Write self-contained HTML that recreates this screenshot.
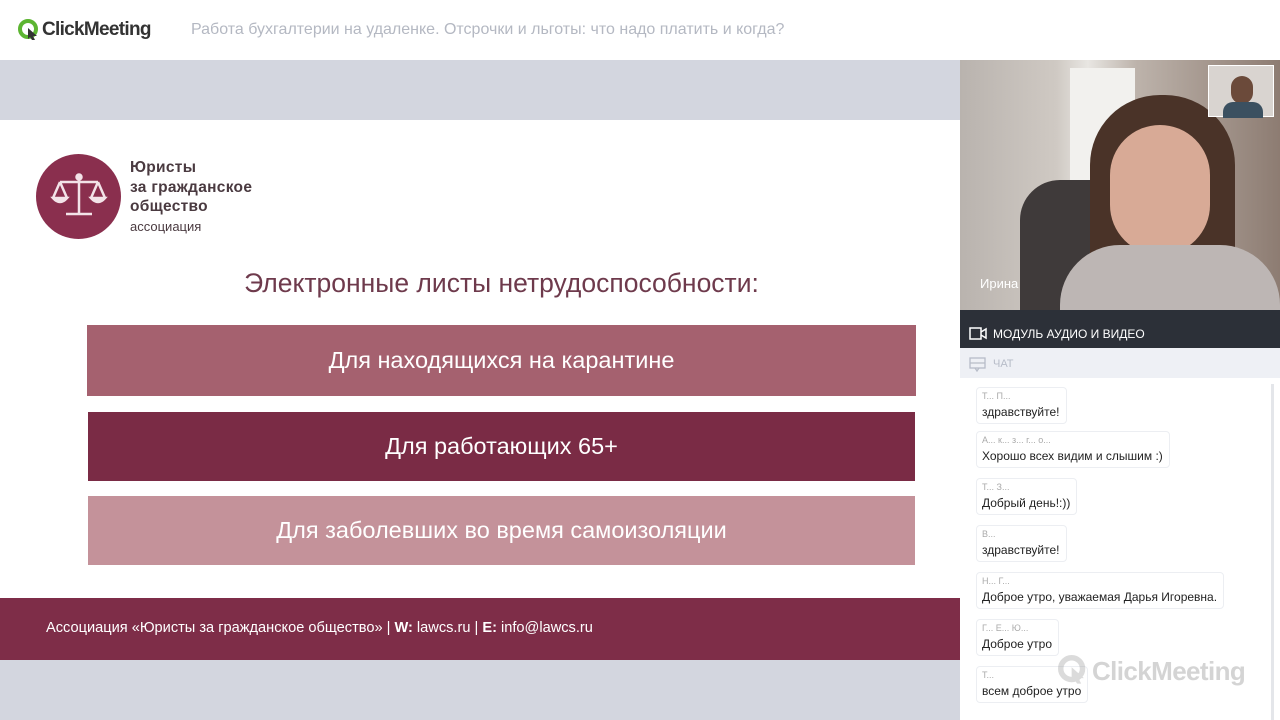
<!DOCTYPE html>
<html><head><meta charset="utf-8"><style>
*{margin:0;padding:0;box-sizing:border-box}
body{width:1280px;height:720px;overflow:hidden;background:#fff;font-family:"Liberation Sans","Noto Sans CJK SC",sans-serif;position:relative}
.a{position:absolute}
.bar{position:absolute;left:87px;width:829px;color:#fff;font-size:23.5px;text-align:center}
.msg{position:absolute;left:976px;border:1px solid #eceef2;border-radius:4px;padding:3px 6px 4px 5px;font-size:12px;color:#222;background:#fff}
.msg i{display:block;font-style:normal;font-size:9px;color:#aaa;margin-bottom:4px}
</style></head><body>
<div class="a" style="left:0;top:0;width:1280px;height:60px;background:#fff"></div>
<svg class="a" style="left:18px;top:19px" width="22" height="22" viewBox="0 0 22 22"><circle cx="10" cy="10" r="8" fill="none" stroke="#5cb531" stroke-width="4"/><path d="M10 9 L19 17 L15 17 L17 21 L14 21 L12 18 L10 20Z" fill="#333"/></svg>
<div class="a" style="left:42px;top:19px;font-size:19px;font-weight:bold;color:#333;letter-spacing:-0.7px">ClickMeeting</div>
<div class="a" style="left:191px;top:21px;font-size:16px;color:#b4b8c2">Работа бухгалтерии на удаленке. Отсрочки и льготы: что надо платить и когда?</div>
<div class="a" style="left:0;top:60px;width:960px;height:60px;background:#d3d6df"></div>
<div class="a" style="left:0;top:660px;width:960px;height:60px;background:#d3d6df"></div>
<div class="a" style="left:36px;top:154px;width:85px;height:85px;border-radius:50%;background:#8a2f4e"></div>
<svg class="a" style="left:50px;top:172px" width="58" height="50" viewBox="0 0 58 50" fill="none" stroke="#f3e3e8" stroke-width="2.5"><path d="M29 4V42M10 10H48M16 42H42M10 10L3 26M10 10L17 26M48 10L41 26M48 10L55 26"/><path d="M3 26Q10 34 17 26ZM41 26Q48 34 55 26Z" fill="#f3e3e8"/><circle cx="29" cy="5" r="2.5" fill="#f3e3e8"/></svg>
<div class="a" style="left:130px;top:158px;font-size:15.5px;font-weight:bold;color:#4a3a40;line-height:19.5px;letter-spacing:0.3px">Юристы<br>за гражданское<br>общество</div>
<div class="a" style="left:130px;top:219px;font-size:13px;color:#4a3a40">ассоциация</div>
<div class="a" style="left:0;top:268px;width:1003px;text-align:center;font-size:26.5px;color:#6e3a4c">Электронные листы нетрудоспособности:</div>
<div class="bar" style="top:325px;height:71px;line-height:71px;background:#a5616f">Для находящихся на карантине</div>
<div class="bar" style="top:412px;height:69px;line-height:69px;background:#7a2b45;left:88px;width:827px">Для работающих 65+</div>
<div class="bar" style="top:496px;height:69px;line-height:69px;background:#c4929a;left:88px;width:827px">Для заболевших во время самоизоляции</div>
<div class="a" style="left:0;top:598px;width:960px;height:62px;background:#7e2d48"></div>
<div class="a" style="left:46px;top:620px;font-size:14.6px;color:#fff">Ассоциация «Юристы за гражданское общество» | <b>W:</b> lawcs.ru | <b>E:</b> info@lawcs.ru</div>
<!-- video -->
<div class="a" style="left:960px;top:60px;width:320px;height:250px;background:linear-gradient(90deg,#b9b3ae 0%,#cfc9c3 30%,#e8e6e2 40%,#bdb3ab 55%,#8d7c72 100%);overflow:hidden">
<div class="a" style="left:110px;top:8px;width:65px;height:170px;background:#f2f1ee"></div>
<div class="a" style="left:60px;top:120px;width:120px;height:130px;background:#3f3a3a;border-radius:40px 40px 0 0"></div>
<div class="a" style="left:130px;top:35px;width:145px;height:200px;background:#4a3328;border-radius:70px 70px 30px 30px"></div>
<div class="a" style="left:150px;top:65px;width:100px;height:130px;background:#d8aa96;border-radius:50px"></div>
<div class="a" style="left:100px;top:185px;width:220px;height:70px;background:#bdb6b4;border-radius:60px 60px 0 0"></div>
<div class="a" style="left:248px;top:5px;width:66px;height:52px;background:#d9d4d0;border:1px solid #fff"><div class="a" style="left:22px;top:10px;width:22px;height:28px;border-radius:11px;background:#6b4a3a"></div><div class="a" style="left:14px;top:36px;width:40px;height:16px;background:#3b5060;border-radius:10px 10px 0 0"></div></div>
<div class="a" style="left:20px;top:216px;font-size:13px;color:#fff">Ирина</div>
</div>
<div class="a" style="left:960px;top:310px;width:320px;height:38px;background:#2c3038"></div>
<svg class="a" style="left:969px;top:327px" width="18" height="13" viewBox="0 0 18 13" fill="none" stroke="#fff" stroke-width="1.5"><rect x="1" y="1" width="11" height="11"/><path d="M12 5L17 2V11L12 8"/></svg>
<div class="a" style="left:993px;top:327px;font-size:12px;color:#fff">МОДУЛЬ АУДИО И ВИДЕО</div>
<div class="a" style="left:960px;top:348px;width:320px;height:30px;background:#eef0f5"></div>
<svg class="a" style="left:969px;top:357px" width="17" height="15" viewBox="0 0 17 15" fill="none" stroke="#b7bcc8" stroke-width="1.3"><rect x="1" y="1" width="15" height="10"/><path d="M1 6H16M6 11L8 14L10 11"/></svg>
<div class="a" style="left:993px;top:358px;font-size:11px;color:#b7bcc8">ЧАТ</div>
<div class="a" style="left:1271px;top:384px;width:3px;height:336px;background:#e4e6ea"></div>
<div class="msg" style="top:387px"><i>Т... П...</i>здравствуйте!</div>
<div class="msg" style="top:431px"><i>А... к... з... г... о...</i>Хорошо всех видим и слышим :)</div>
<div class="msg" style="top:478px"><i>Т... З...</i>Добрый день!:))</div>
<div class="msg" style="top:525px"><i>В...</i>здравствуйте!</div>
<div class="msg" style="top:572px"><i>Н... Г...</i>Доброе утро, уважаемая Дарья Игоревна.</div>
<div class="msg" style="top:619px"><i>Г... Е... Ю...</i>Доброе утро</div>
<div class="msg" style="top:666px"><i>Т...</i>всем доброе утро</div>
<svg class="a" style="left:1058px;top:655px" width="30" height="30" viewBox="0 0 22 22" opacity="0.35"><circle cx="10" cy="10" r="8" fill="none" stroke="#999" stroke-width="4"/><path d="M10 9 L19 17 L15 17 L17 21 L14 21 L12 18 L10 20Z" fill="#999"/></svg>
<div class="a" style="left:1092px;top:656px;font-size:26px;font-weight:bold;color:#d4d4d4;letter-spacing:-0.6px">ClickMeeting</div>
</body></html>
